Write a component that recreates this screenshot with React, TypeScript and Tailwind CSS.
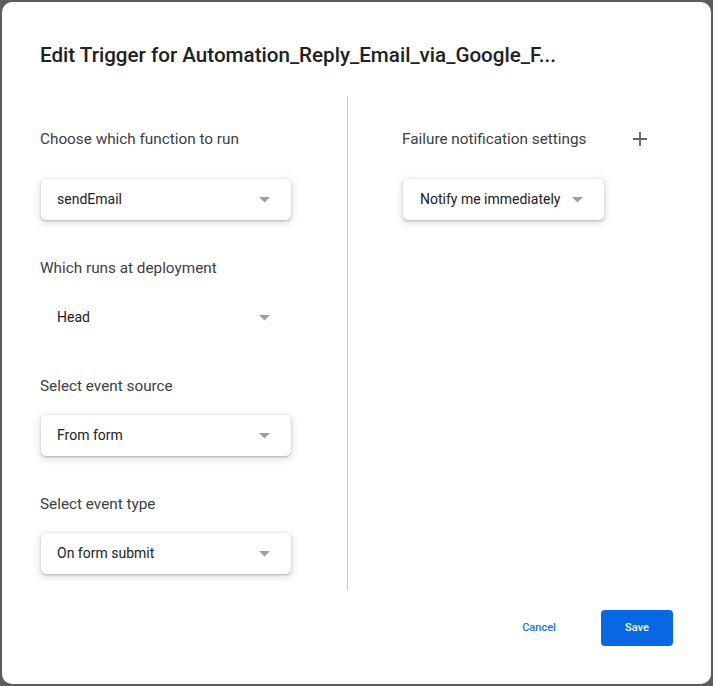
import { ReactNode } from 'react';

function Arrow() {
  return (
    <svg width="11" height="6" viewBox="0 0 11 6" className="shrink-0">
      <polygon points="0,0 11,0 5.5,5.5" fill="#9e9e9e" />
    </svg>
  );
}

function Select({ value, flat }: { value: string; flat?: boolean }) {
  return (
    <div
      className={
        flat
          ? 'flex h-[41px] w-[250px] items-center justify-between pl-4 pr-[21px]'
          : 'flex h-[41px] w-[250px] items-center justify-between rounded-[5px] bg-white pl-4 pr-[21px] shadow-[0_1px_2px_rgba(60,64,67,0.3),0_2px_6px_2px_rgba(60,64,67,0.15)]'
      }
    >
      <span className="text-[14px] text-[#202124]">{value}</span>
      <Arrow />
    </div>
  );
}

function Label({ children, className }: { children: ReactNode; className?: string }) {
  return (
    <div className={`-ml-px h-5 text-[15.3px] leading-5 text-[#3c4043] ${className ?? ''}`}>{children}</div>
  );
}

export default function App() {
  return (
    <div className="h-[686px] w-[713px] bg-[#5c5c5c] p-[2px]" style={{ fontFamily: 'Roboto, "Liberation Sans", sans-serif' }}>
      <div className="flex h-[682px] w-[709px] flex-col rounded-[10px] bg-white">
        <h1 className="pl-[38px] pt-[39px] text-[20.6px] font-medium leading-7 text-[#202124]">
          Edit Trigger for Automation_Reply_Email_via_Google_F...
        </h1>

        <div className="mt-[27px] flex">
          {/* left column */}
          <div className="w-[345px] pl-[39px] pt-[33px] pb-[16px]">
            <Label>Choose which function to run</Label>
            <div className="mt-[30px]">
              <Select value="sendEmail" />
            </div>

            <Label className="mt-[38px]">Which runs at deployment</Label>
            <div className="mt-[19px]">
              <Select value="Head" flat />
            </div>

            <Label className="mt-[38px]">Select event source</Label>
            <div className="mt-[19px]">
              <Select value="From form" />
            </div>

            <Label className="mt-[38px]">Select event type</Label>
            <div className="mt-[19px]">
              <Select value="On form submit" />
            </div>
          </div>

          <div className="w-px bg-[#c8c8c8]" />

          {/* right column */}
          <div className="flex-1 pl-[55px] pt-[33px]">
            <div className="flex h-5 items-center">
              <Label>Failure notification settings</Label>
              <button className="ml-[44px] flex h-5 w-[20px] items-center justify-center">
                <svg width="14" height="14" viewBox="0 0 14 14">
                  <path d="M7 0v14M0 7h14" stroke="#5f6368" strokeWidth="1.8" />
                </svg>
              </button>
            </div>
            <div className="mt-[30px] inline-flex h-[41px] items-center rounded-[5px] bg-white pl-[17px] pr-[21px] shadow-[0_1px_2px_rgba(60,64,67,0.3),0_2px_6px_2px_rgba(60,64,67,0.15)]">
              <span className="text-[14px] text-[#202124]">Notify me immediately</span>
              <span className="ml-3">
                <Arrow />
              </span>
            </div>
          </div>
        </div>

        <div className="mt-[20px] flex justify-end pr-[38px]">
          <button className="mr-[26px] h-9 w-[72px] rounded text-[11px] font-medium text-[#1a73e8]">Cancel</button>
          <button className="h-9 w-[72px] rounded-[4px] bg-[#0867e2] text-[11px] font-medium text-white">Save</button>
        </div>
      </div>
    </div>
  );
}
